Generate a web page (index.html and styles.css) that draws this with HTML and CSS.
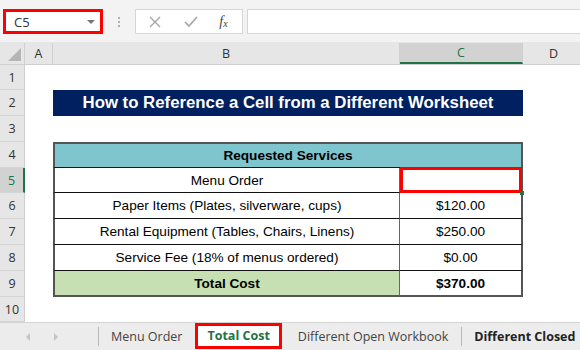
FILE: index.html
```html
<!DOCTYPE html>
<html lang="en">
<head>
<meta charset="UTF-8">
<title>Reference a Cell from a Different Worksheet</title>
<link rel="stylesheet" href="styles.css">
</head>
<body>
<div class="toolbar">
    <div class="name-box">
        <span>C5</span>
        <span class="drop"></span>
    </div>
    <div class="dots">
        <i></i><i></i><i></i>
    </div>
    <div class="fx-buttons">
        <svg width="14" height="14" viewBox="0 0 14 14"><path d="M2 2 L12 12 M12 2 L2 12" stroke="#a6a6a6" stroke-width="1.4" fill="none"/></svg>
        <svg width="16" height="14" viewBox="0 0 16 14"><path d="M2 7 L6 11 L14 2" stroke="#a6a6a6" stroke-width="1.6" fill="none"/></svg>
        <span class="fx">f<sub>x</sub></span>
    </div>
    <div class="formula-input"></div>
</div>

<div class="sheet">
    <div class="row head">
        <div class="corner"><span class="tri"></span></div>
        <div class="ch">A</div>
        <div class="ch">B</div>
        <div class="ch active">C</div>
        <div class="ch">D</div>
    </div>

    <div class="row r25">
        <div class="rh">1</div><div></div><div></div><div></div><div></div>
    </div>
    <div class="row">
        <div class="rh">2</div><div></div>
        <div class="title">How to Reference a Cell from a Different Worksheet</div>
        <div></div>
    </div>
    <div class="row">
        <div class="rh">3</div><div></div><div></div><div></div><div></div>
    </div>
    <div class="row">
        <div class="rh">4</div><div></div>
        <div class="tc head-cell top">Requested Services</div>
        <div></div>
    </div>
    <div class="row r25">
        <div class="rh active">5</div><div></div>
        <div class="tc first">Menu Order</div>
        <div class="tc last selected"></div>
        <div></div>
    </div>
    <div class="row">
        <div class="rh">6</div><div></div>
        <div class="tc first">Paper Items (Plates, silverware, cups)</div>
        <div class="tc last">$120.00</div>
        <div></div>
    </div>
    <div class="row">
        <div class="rh">7</div><div></div>
        <div class="tc first">Rental Equipment (Tables, Chairs, Linens)</div>
        <div class="tc last">$250.00</div>
        <div></div>
    </div>
    <div class="row">
        <div class="rh">8</div><div></div>
        <div class="tc first">Service Fee (18% of menus ordered)</div>
        <div class="tc last">$0.00</div>
        <div></div>
    </div>
    <div class="row">
        <div class="rh">9</div><div></div>
        <div class="tc first total">Total Cost</div>
        <div class="tc last bold">$370.00</div>
        <div></div>
    </div>
    <div class="row r25">
        <div class="rh">10</div><div></div><div></div><div></div><div></div>
    </div>
</div>

<div class="tabbar">
    <div class="arrows">
        <span class="arrow left"></span>
        <span class="arrow right"></span>
    </div>
    <div class="tab">Menu Order</div>
    <div class="tab current">Total Cost</div>
    <div class="tab">Different Open Workbook</div>
    <div class="tab sep bold">Different Closed</div>
</div>
</body>
</html>
```

FILE: styles.css
```css
html, body {
    margin: 0;
    height: 100%;
    overflow: hidden;
}

body {
    width: 580px;
    height: 350px;
    background-color: #ffffff;
    font-family: "Liberation Sans", Arial, sans-serif;
    color: #000;
}

/* formula bar */
.toolbar {
    height: 43px;
    background-color: #f3f3f3;
    display: flex;
    align-items: flex-start;
    padding-top: 9px;
    box-sizing: border-box;
    border-bottom: 1px solid #e6e6e6;
}

.name-box {
    width: 100px;
    height: 25px;
    margin-left: 3px;
    box-sizing: border-box;
    border: 3px solid #ff0000;
    background-color: #fff;
    display: flex;
    align-items: center;
    justify-content: space-between;
    padding: 0 5px 0 8px;
    font-family: "Open Sans", sans-serif;
    font-size: 13px;
    color: #333;
}

.drop {
    width: 0;
    height: 0;
    border-left: 4px solid transparent;
    border-right: 4px solid transparent;
    border-top: 4px solid #777;
}

.dots {
    width: 32px;
    height: 25px;
    display: flex;
    flex-direction: column;
    align-items: center;
    justify-content: center;
    gap: 2px;
}

.dots i {
    width: 2px;
    height: 2px;
    background-color: #b0b0b0;
}

.fx-buttons {
    width: 108px;
    height: 25px;
    box-sizing: border-box;
    border: 1px solid #d6d6d6;
    background-color: #fff;
    display: flex;
    align-items: center;
    justify-content: space-around;
    padding: 0 4px 0 2px;
}

.fx {
    font-family: "Liberation Serif", serif;
    font-style: italic;
    font-size: 14px;
    color: #444;
    line-height: 1;
}

.fx sub {
    font-size: 10px;
    vertical-align: -1px;
}

.formula-input {
    flex: 1;
    height: 25px;
    margin-left: 4px;
    box-sizing: border-box;
    border: 1px solid #d6d6d6;
    border-right: none;
    background-color: #fff;
}

/* grid */
.row {
    display: grid;
    grid-template-columns: 25px 28px 347px 123px 62px;
    height: 26px;
}

.row.r25 {
    height: 25px;
}

.row > div {
    box-sizing: border-box;
}

.row.head {
    height: 21px;
    background-color: #e6e6e6;
    border-bottom: 1px solid #cfcfcf;
    box-sizing: content-box;
}

.corner {
    position: relative;
    border-right: 1px solid #cfcfcf;
}

.tri {
    position: absolute;
    right: 3px;
    bottom: 3px;
    width: 0;
    height: 0;
    border-left: 13px solid transparent;
    border-bottom: 13px solid #b5b5b5;
}

.ch {
    display: flex;
    align-items: center;
    justify-content: center;
    font-family: "Open Sans", sans-serif;
    font-size: 12.5px;
    color: #333;
    border-right: 1px solid #cfcfcf;
}

.ch.active {
    background-color: #d2d2d2;
    color: #217346;
    border-bottom: 2px solid #217346;
}

.rh {
    display: flex;
    align-items: center;
    justify-content: center;
    background-color: #e6e6e6;
    border-right: 1px solid #cfcfcf;
    border-bottom: 1px solid #d4d4d4;
    font-family: "Open Sans", sans-serif;
    font-size: 12.5px;
    color: #333;
}

.rh.active {
    background-color: #d2d2d2;
    color: #217346;
    border-right: 2px solid #217346;
}

.title {
    grid-column: 3 / 5;
    background-color: #002060;
    color: #fff;
    font-weight: bold;
    font-size: 16.8px;
    display: flex;
    align-items: center;
    justify-content: center;
}

.tc {
    display: flex;
    align-items: center;
    justify-content: center;
    font-size: 13.6px;
    border-bottom: 1px solid #111;
}

.tc.head-cell {
    grid-column: 3 / 5;
    background-color: #7ec5cd;
    font-weight: bold;
    border: 2px solid #555;
    border-bottom: 1px solid #111;
}

.tc.first {
    border-left: 2px solid #555;
    border-right: 1px solid #666;
}

.tc.last {
    border-right: 2px solid #555;
}

.tc.total {
    background-color: #c6e0b4;
    font-weight: bold;
}

.row:nth-child(10) .tc {
    border-bottom: 2px solid #555;
}

.bold {
    font-weight: bold;
}

.selected {
    position: relative;
}

.selected::after {
    content: "";
    position: absolute;
    left: 0;
    top: -1px;
    right: -1px;
    bottom: -1px;
    border: 3px solid #ff0000;
}

.selected::before {
    content: "";
    position: absolute;
    right: -3px;
    bottom: -3px;
    width: 4px;
    height: 4px;
    background-color: #217346;
    z-index: 1;
}

/* sheet tabs */
.tabbar {
    height: 29px;
    background-color: #ececec;
    border-top: 1px solid #d4d4d4;
    display: flex;
    align-items: stretch;
    font-family: "Open Sans", sans-serif;
    font-size: 12.5px;
    color: #444;
    white-space: nowrap;
}

.tabbar > div {
    flex-shrink: 0;
}

.arrows {
    width: 99px;
    display: flex;
    align-items: center;
    gap: 24px;
    padding-left: 26px;
    box-sizing: border-box;
    border-right: 1px solid #b8b8b8;
    margin: 4px 0 6px;
}

.arrow {
    width: 0;
    height: 0;
    border-top: 4px solid transparent;
    border-bottom: 4px solid transparent;
}

.arrow.left {
    border-right: 4px solid #c4c4c4;
}

.arrow.right {
    border-left: 4px solid #c4c4c4;
}

.tab {
    display: flex;
    align-items: center;
    padding: 0 13px 3px;
}

.tab:nth-child(2) {
    padding-left: 12px;
}

.tab.current {
    background-color: #fff;
    border: 3px solid #ff0000;
    color: #217346;
    font-weight: bold;
    margin-bottom: 3px;
    padding: 0 9px 1px;
}

.tab:nth-child(4) {
    padding-left: 16px;
}

.tab.sep {
    position: relative;
    color: #222;
}

.tab.sep::before {
    content: "";
    position: absolute;
    left: 0;
    top: 4px;
    bottom: 6px;
    border-left: 1px solid #b8b8b8;
}
```
